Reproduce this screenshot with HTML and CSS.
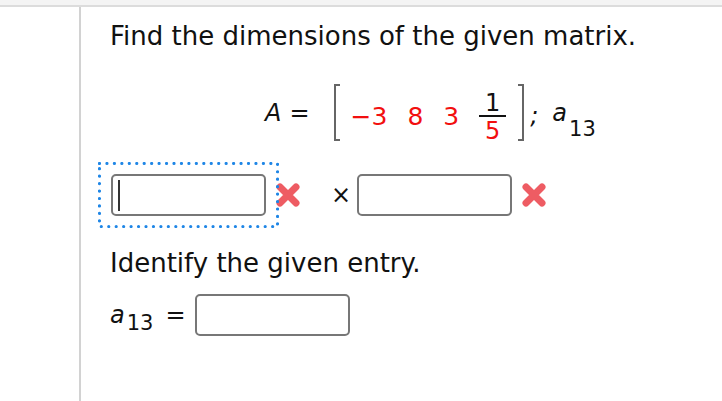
FILE: index.html
```html
<!DOCTYPE html>
<html lang="en">
<head>
    <meta charset="UTF-8">
    <meta name="viewport" content="width=device-width, initial-scale=1.0">
    <title>Matrix Dimensions</title>
    <link rel="stylesheet" href="styles.css">
</head>
<body>
    <div class="topbar"></div>
    <div class="page">
        <div class="gutter"></div>
        <main class="question">
            <p class="prompt prompt-main">Find the dimensions of the given matrix.</p>

            <div class="math-row">
                <span class="var">A</span>
                <span class="op">=</span>
                <span class="matrix">
                    <span class="bracket bracket-left"></span>
                    <span class="cells">
                        <span class="cell">&minus;3</span>
                        <span class="cell">8</span>
                        <span class="cell">3</span>
                        <span class="frac">
                            <span class="num">1</span>
                            <span class="den">5</span>
                        </span>
                    </span>
                    <span class="bracket bracket-right"></span>
                </span>
                <span class="sep">;</span>
                <span class="var var-a">a</span><span class="sub">13</span>
            </div>

            <div class="dims-row">
                <span class="focus-wrap">
                    <input type="text" class="answer" id="rows">
                    <span class="caret"></span>
                    <svg class="focus-ring" width="181" height="66" viewBox="0 0 181 66">
                        <rect x="1.5" y="1.5" width="178" height="63" fill="none" stroke="#1f86e6" stroke-width="3.2" stroke-linecap="round" stroke-dasharray="0 7.45"/>
                    </svg>
                </span>
                <svg class="wrong wrong-first" width="26" height="26" viewBox="0 0 26 26">
                    <path d="M5 5 L21 21 M21 5 L5 21" stroke="#ee5c63" stroke-width="7" stroke-linecap="round"/>
                </svg>
                <span class="times">&times;</span>
                <input type="text" class="answer" id="cols">
                <svg class="wrong" width="26" height="26" viewBox="0 0 26 26">
                    <path d="M5 5 L21 21 M21 5 L5 21" stroke="#ee5c63" stroke-width="7" stroke-linecap="round"/>
                </svg>
            </div>

            <p class="prompt prompt-sub">Identify the given entry.</p>

            <div class="entry-row">
                <span class="var var-a">a</span><span class="sub">13</span>
                <span class="op">=</span>
                <input type="text" class="answer" id="entry">
            </div>
        </main>
    </div>
</body>
</html>
```

FILE: styles.css
```css
* {
    box-sizing: border-box;
}

body {
    margin: 0;
    padding: 0;
    background: #fff;
    font-family: "DejaVu Sans", Verdana, sans-serif;
    color: #111;
    height: 401px;
    overflow: hidden;
}

.topbar {
    height: 7px;
    background: #f4f4f4;
    border-bottom: 2px solid #dcdcdc;
}

.page {
    display: flex;
    height: 394px;
}

.gutter {
    width: 81px;
    border-right: 2px solid #d2d2d2;
    flex-shrink: 0;
}

.question {
    padding-left: 29px;
}

.prompt {
    margin: 0;
    font-size: 26px;
    line-height: 32px;
}

.prompt-main {
    margin-top: 13px;
}

.prompt-sub {
    margin-top: 19px;
}

/* displayed matrix */
.math-row {
    display: flex;
    align-items: center;
    margin-top: 32px;
    margin-left: 155px;
    height: 57px;
    font-size: 24px;
}

.var {
    font-style: italic;
}

.op {
    margin: 0 24px 0 8px;
}

.matrix {
    display: flex;
    align-items: center;
    height: 57px;
}

.bracket {
    width: 6px;
    height: 57px;
    border: 2px solid #666;
}

.bracket-left {
    border-right: none;
}

.bracket-right {
    border-left: none;
}

.cells {
    display: flex;
    align-items: center;
    gap: 20px;
    padding: 0 12px 0 11px;
    color: #f20f0f;
    font-size: 25px;
}

.cell {
    padding-top: 8px;
}

.frac {
    display: flex;
    flex-direction: column;
    align-items: center;
    width: 27px;
    margin-top: 10px;
    font-size: 24px;
}

.num {
    color: #111;
    border-bottom: 2px solid #111;
    width: 100%;
    text-align: center;
    line-height: 24px;
}

.den {
    line-height: 28px;
}

.sep {
    margin: 6px 14px 0 6px;
    font-style: italic;
}

.sub {
    align-self: flex-end;
    margin-left: 2px;
    font-size: 21px;
    line-height: 24px;
}

/* answer boxes */
.answer {
    width: 155px;
    height: 42px;
    border: 2px solid #777;
    border-radius: 5px;
    background: #fff;
    font: inherit;
    outline: none;
}

.dims-row {
    display: flex;
    align-items: center;
    margin-top: 21px;
    margin-left: -12px;
}

.focus-wrap {
    position: relative;
    display: flex;
    padding: 12px 13px;
}

.focus-ring {
    position: absolute;
    left: 0;
    top: 0;
}

.caret {
    position: absolute;
    left: 20px;
    top: 18px;
    width: 2px;
    height: 31px;
    background: #333;
}

.wrong {
    margin-left: 9px;
}

.wrong-first {
    margin-left: -4px;
}

.times {
    font-size: 24px;
    margin: 0 6px 0 30px;
}

.entry-row {
    display: flex;
    align-items: center;
    margin-top: 15px;
    font-size: 24px;
}

.entry-row .sub {
    align-self: auto;
    margin-top: 16px;
}

.entry-row .op {
    margin: 0 9px 0 12px;
}
```
